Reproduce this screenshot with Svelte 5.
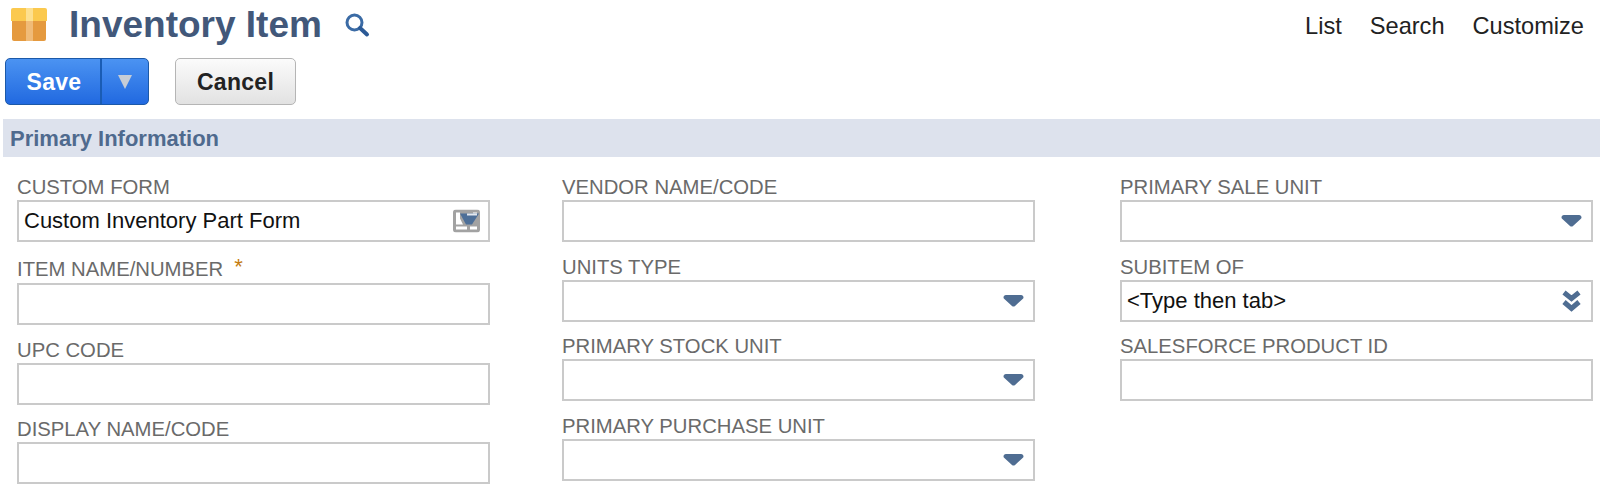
<script>
	const columns = [
		{
			cls: 'col-a',
			fields: [
				{ label: 'CUSTOM FORM', value: 'Custom Inventory Part Form', icon: 'form' },
				{ label: 'ITEM NAME/NUMBER', required: true },
				{ label: 'UPC CODE' },
				{ label: 'DISPLAY NAME/CODE' }
			]
		},
		{
			cls: 'col-b',
			fields: [
				{ label: 'VENDOR NAME/CODE' },
				{ label: 'UNITS TYPE', icon: 'down' },
				{ label: 'PRIMARY STOCK UNIT', icon: 'down' },
				{ label: 'PRIMARY PURCHASE UNIT', icon: 'down' }
			]
		},
		{
			cls: 'col-c',
			fields: [
				{ label: 'PRIMARY SALE UNIT', icon: 'down' },
				{ label: 'SUBITEM OF', value: '<Type then tab>', icon: 'double' },
				{ label: 'SALESFORCE PRODUCT ID' }
			]
		}
	];
</script>

<div class="page">
	<header class="top">
		<svg class="box-icon" width="38" height="35" viewBox="0 0 38 35">
			<path d="M2 13h34v19a2 2 0 0 1-2 2H4a2 2 0 0 1-2-2z" fill="#e59a3f" />
			<path d="M1 3a2 2 0 0 1 2-2h32a2 2 0 0 1 2 2v11H1z" fill="#fbc94e" />
			<rect x="16" y="1" width="7" height="13" fill="#fde08f" />
			<rect x="16" y="14" width="7" height="20" fill="#f0bb78" />
		</svg>
		<h1>Inventory Item</h1>
		<svg class="search" width="26" height="26" viewBox="0 0 26 26" fill="none">
			<circle cx="10.500" cy="10.500" r="7.500" stroke="#3b6ba5" stroke-width="3" />
			<path d="M16 16l7 6.500" stroke="#2c5a96" stroke-width="4" stroke-linecap="round" />
		</svg>
		<nav>
			<span>List</span>
			<span>Search</span>
			<span>Customize</span>
		</nav>
	</header>

	<div class="actions">
		<div class="save">
			<span class="save-label">Save</span>
			<span class="save-arrow"><i></i></span>
		</div>
		<div class="cancel">Cancel</div>
	</div>

	<div class="band">Primary Information</div>

	<div class="form">
		{#each columns as col}
			<div class="col {col.cls}">
				{#each col.fields as f}
					<div class="field">
						<div class="label">
							{f.label}{#if f.required}<span class="req">*</span>{/if}
						</div>
						<div class="input">
							{#if f.value}<span>{f.value}</span>{/if}
							{#if f.icon === 'form'}
								<svg class="ic ic-form" width="27" height="23" viewBox="0 0 27 23">
									<rect width="27" height="23" rx="3" fill="#a2a2a2" />
									<path d="M3 15h7l-3-6V3H3zM20 3h4v2h-4zM3 17h11v3H3zM17 17h7v3h-7z" fill="#fff" />
									<path d="M7 4h19l-7 11h-6z" fill="#4d6f98" />
									<rect x="14" y="4" width="10" height="2" fill="#e4e8ee" />
								</svg>
							{:else if f.icon === 'down'}
								<svg class="ic ic-down" width="21" height="13" viewBox="0 0 21 13">
									<path d="M.5 3C.5 1.500 1.500.5 3 .5h15c1.500 0 2.500 1 2.500 2.500 0 .5-.2.9-.6 1.200L12 11.500c-.8.800-2.200.800-3 0L1.100 4.200C.7 3.900.5 3.500.5 3z" fill="#4f6d92" />
								</svg>
							{:else if f.icon === 'double'}
								<svg class="ic ic-down" width="21" height="22" viewBox="0 0 21 22" fill="none" stroke="#4f6d92" stroke-width="5">
									<path d="M3 2.500l7.500 6 7.500-6M3 12l7.500 6.500L18 12" />
								</svg>
							{/if}
						</div>
					</div>
				{/each}
			</div>
		{/each}
	</div>
</div>

<style>
	:global(body) {
		background: #fff;
		font-family: "Liberation Sans", Arial, sans-serif;
	}

	.page {
		height: 487px;
		overflow: hidden;
	}

	.top {
		display: flex;
		align-items: center;
		height: 50px;
		padding: 0 16px 0 10px;
	}

	.box-icon {
		margin-right: 21px;
		margin-top: -1px;
	}

	h1 {
		margin: 0;
		font-size: 37px;
		font-weight: 700;
		color: #42587a;
	}

	.search {
		margin-left: 22px;
	}

	nav {
		margin-left: auto;
		display: flex;
		gap: 28px;
		padding-top: 2px;
		font-size: 23.600px;
		color: #222;
	}

	.actions {
		display: flex;
		gap: 26px;
		padding: 8px 0 0 5px;
	}

	.save {
		display: flex;
		width: 144px;
		height: 47px;
		border: 1px solid #1c59a8;
		border-radius: 5px;
		background: linear-gradient(#4b93f2, #2169e0);
		color: #fff;
		font-size: 23px;
		font-weight: 700;
		box-sizing: border-box;
	}

	.save-label {
		width: 96px;
		padding: 2px 0 0 2px;
		box-sizing: border-box;
		display: flex;
		align-items: center;
		justify-content: center;
		border-right: 2px solid #1a5cb4;
		letter-spacing: 0.300px;
	}

	.save-arrow {
		flex: 1;
		display: flex;
		align-items: center;
		justify-content: center;
	}

	.save-arrow i {
		width: 0;
		height: 0;
		border-left: 7px solid transparent;
		border-right: 7px solid transparent;
		border-top: 14px solid #c6cdd6;
	}

	.cancel {
		width: 121px;
		height: 47px;
		padding-top: 2px;
		box-sizing: border-box;
		display: flex;
		align-items: center;
		justify-content: center;
		border: 1px solid #b5b5b5;
		border-radius: 5px;
		background: linear-gradient(#fbfbfb, #e2e2e2);
		font-size: 23px;
		font-weight: 700;
		color: #222;
		letter-spacing: 0.300px;
	}

	.band {
		margin: 14px 0 0 3px;
		height: 38px;
		line-height: 40px;
		padding-left: 7px;
		background: #dde2ed;
		color: #4f6a8e;
		font-size: 22px;
		font-weight: 700;
	}

	.form {
		display: flex;
		padding: 6px 0 0 17px;
	}

	.col {
		width: 473px;
	}

	.col-b {
		margin-left: 72px;
	}

	.col-c {
		margin-left: 85px;
	}

	.col-a .field:nth-child(2) {
		margin-top: 3.500px;
	}

	.col-a .field:nth-child(2) .label {
		padding-top: 8px;
		height: 37px;
	}

	.field {
		height: 79.600px;
	}

	.label {
		height: 37px;
		padding-top: 11px;
		box-sizing: border-box;
		line-height: 26px;
		font-size: 20.300px;
		color: #6a6a6a;
		white-space: nowrap;
	}

	.req {
		margin-left: 11px;
		color: #c47c10;
		font-size: 22px;
		vertical-align: 2px;
	}

	.input {
		position: relative;
		height: 42px;
		box-sizing: border-box;
		border: 2px solid #cacaca;
		padding-left: 5px;
		display: flex;
		align-items: center;
		font-size: 22px;
		color: #111;
	}

	.ic {
		position: absolute;
		right: 10px;
		top: 50%;
		transform: translateY(-50%);
	}

	.ic-form {
		right: 8px;
	}

	.ic-down {
		right: 9px;
	}
</style>
